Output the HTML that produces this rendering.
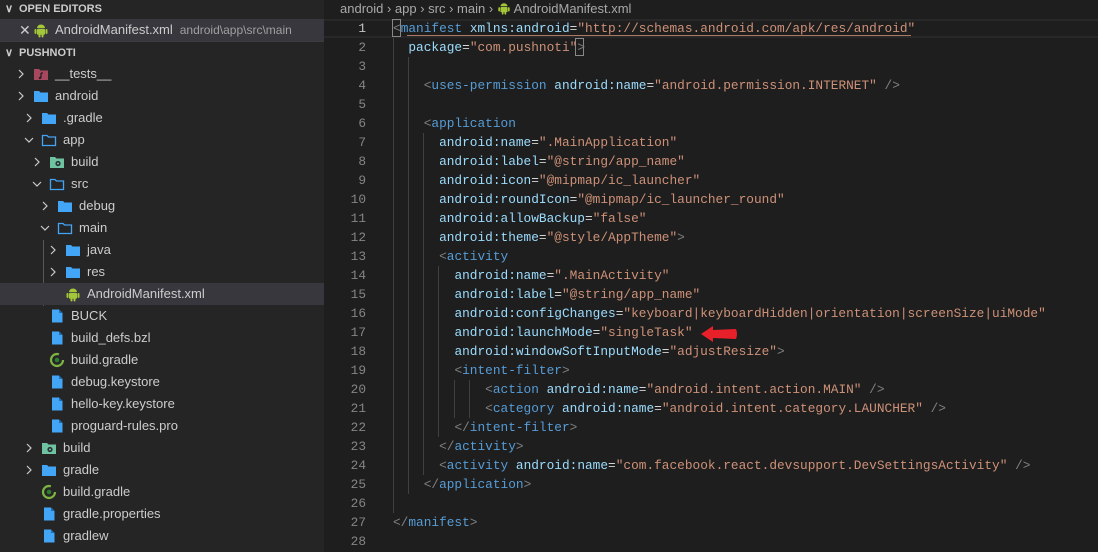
<!DOCTYPE html>
<html><head><meta charset="utf-8"><style>
*{margin:0;padding:0;box-sizing:border-box}
body{width:1098px;height:552px;overflow:hidden;background:#1e1e1e;position:relative;font-family:"Liberation Sans",sans-serif}
#side{position:absolute;left:0;top:0;width:324px;height:552px;background:#252526}
.hdr{position:absolute;left:0;height:22px;width:324px;color:#ccc;font-size:11px;font-weight:bold;line-height:22px}
.hdr .cv{position:absolute;left:5px;top:0}
.hdr .ht{position:absolute;left:19px;color:#ccc}
.row{position:absolute;left:0;width:324px;height:22px;color:#ccc;font-size:13px;line-height:22px;white-space:nowrap}
.row.sel{background:#37373d}
.row svg{position:absolute}
.row .lb{position:absolute;top:0}
.bc{position:absolute;left:340px;top:0;height:19px;line-height:17px;font-size:13px;color:#a9a9a9;white-space:nowrap}
.ln{position:absolute;left:330px;width:36px;text-align:right;font-family:"Liberation Mono",monospace;font-size:12.8px;color:#858585;height:19px;line-height:19px}
.ln.cur{color:#c6c6c6}
.cl{position:absolute;left:393px;height:19px;line-height:19px;font-family:"Liberation Mono",monospace;font-size:12.8px;white-space:pre;color:#d4d4d4}
.t{color:#569cd6}.a{color:#9cdcfe}.s{color:#ce9178}.p{color:#808080}
.g{position:absolute;width:1px;background:#404040}
</style></head><body>
<div id="side">
<div class="hdr" style="top:-2px"><span class="cv">&#8744;</span><span class="ht">OPEN EDITORS</span></div>
<div class="row sel" style="top:19px">
<span class="lb" style="left:19px;color:#ccc;font-size:14px">✕</span>
<svg style="left:33px;top:3px" width="16" height="16" viewBox="0 0 16 16"><path d="M4 6a4 3.5 0 0 1 8 0z" fill="#a4c639"/><rect x="4" y="6.8" width="8" height="6" rx="1" fill="#a4c639"/><rect x="1.5" y="7" width="2" height="5" rx="1" fill="#a4c639"/><rect x="12.5" y="7" width="2" height="5" rx="1" fill="#a4c639"/><rect x="5.5" y="12" width="2" height="3.5" rx="1" fill="#a4c639"/><rect x="8.5" y="12" width="2" height="3.5" rx="1" fill="#a4c639"/></svg>
<span class="lb" style="left:55px">AndroidManifest.xml <span style="font-size:12px;color:#a0a0a0">&nbsp;android\app\src\main</span></span></div>
<div style="position:absolute;top:41px;left:0;width:324px;height:1px;background:#3c3c3c"></div>
<div class="hdr" style="top:42px"><span class="cv">&#8744;</span><span class="ht">PUSHNOTI</span></div>
<div style="position:absolute;left:43px;top:240px;width:1px;height:66px;background:#585858"></div>
<div id="tree"></div>
</div>
<div class="bc">android &#8250; app &#8250; src &#8250; main &#8250; <svg width="14" height="14" viewBox="0 0 16 16" style="vertical-align:-2px"><path d="M4 6a4 3.5 0 0 1 8 0z" fill="#a4c639"/><rect x="4" y="6.8" width="8" height="6" rx="1" fill="#a4c639"/><rect x="1.5" y="7" width="2" height="5" rx="1" fill="#a4c639"/><rect x="12.5" y="7" width="2" height="5" rx="1" fill="#a4c639"/><rect x="5.5" y="12" width="2" height="3.5" rx="1" fill="#a4c639"/><rect x="8.5" y="12" width="2" height="3.5" rx="1" fill="#a4c639"/></svg> AndroidManifest.xml</div>
<div style="position:absolute;left:324px;top:19px;width:774px;height:19px;border-top:2px solid #282828;border-bottom:2px solid #282828"></div>
<div style="position:absolute;left:407px;top:35px;width:504px;height:1px;background:#ce9178;opacity:.8"></div>
<div style="position:absolute;left:392px;top:19px;width:9px;height:18px;border:1px solid #888"></div>
<div style="position:absolute;left:575px;top:38px;width:9px;height:18px;border:1px solid #888"></div>
<div id="code"></div>
<svg style="position:absolute;left:700px;top:325px" width="38" height="18" viewBox="0 0 38 18"><path d="M1 9 L13 1 L13 5 L36 4 Q38 9 36 14 L13 13 L13 17 Z" fill="#e8202a"/></svg>
<script>
var F='<path d="M1 3h5l1.5 1.5H15v9.5H1z" fill="#42a5f5"/>';
var FO='<path d="M1.5 3.5h4.5l1.5 1.5h7v8.5h-13z" fill="none" stroke="#42a5f5" stroke-width="1.3"/>';
var FB='<path d="M1 3h5l1.5 1.5H15v9.5H1z" fill="#6fc3a0"/><circle cx="9" cy="9.5" r="2.6" fill="#263238"/><circle cx="9" cy="9.5" r="1" fill="#6fc3a0"/>';
var FT='<path d="M1 3h5l1.5 1.5H15v9.5H1z" fill="#a8485f"/><path d="M8 7v5M8 7h2" stroke="#222" stroke-width="1.3"/><circle cx="7" cy="12" r="1.2" fill="#222"/>';
var FI='<path d="M3 1.5h7l3.5 3.5v9.5H3z" fill="#42a5f5"/><path d="M10 1.5v3.5h3.5" fill="#1e6fb5"/>';
var GR='<circle cx="8" cy="8" r="6" fill="none" stroke="#7cb342" stroke-width="2.2" stroke-dasharray="30 8"/><circle cx="8" cy="8" r="2.3" fill="#2e7d32"/>';
var AN='<path d="M4 6a4 3.5 0 0 1 8 0z" fill="#a4c639"/><rect x="4" y="6.8" width="8" height="6" rx="1" fill="#a4c639"/><rect x="1.5" y="7" width="2" height="5" rx="1" fill="#a4c639"/><rect x="12.5" y="7" width="2" height="5" rx="1" fill="#a4c639"/><rect x="5.5" y="12" width="2" height="3.5" rx="1" fill="#a4c639"/><rect x="8.5" y="12" width="2" height="3.5" rx="1" fill="#a4c639"/>';
var items=[[0,FT,'__tests__','>'],[0,F,'android','>'],[1,F,'.gradle','>'],[1,FO,'app','v'],[2,FB,'build','>'],[2,FO,'src','v'],[3,F,'debug','>'],[3,FO,'main','v'],[4,F,'java','>'],[4,F,'res','>'],[4,AN,'AndroidManifest.xml',''],[2,FI,'BUCK',''],[2,FI,'build_defs.bzl',''],[2,GR,'build.gradle',''],[2,FI,'debug.keystore',''],[2,FI,'hello-key.keystore',''],[2,FI,'proguard-rules.pro',''],[1,FB,'build','>'],[1,F,'gradle','>'],[1,GR,'build.gradle',''],[1,FI,'gradle.properties',''],[1,FI,'gradlew','']];
var h='';
items.forEach(function(it,i){var top=63+22*i,L=it[0];
h+='<div class="row'+(i==10?' sel':'')+'" style="top:'+top+'px">';
if(it[3]=='>')h+='<svg style="left:'+(16+8*L)+'px;top:5px" width="10" height="12"><path d="M3 2l4 4-4 4" fill="none" stroke="#ccc" stroke-width="1.2"/></svg>';
if(it[3]=='v')h+='<svg style="left:'+(15+8*L)+'px;top:5px" width="12" height="12"><path d="M2 4l4 4 4-4" fill="none" stroke="#ccc" stroke-width="1.2"/></svg>';
h+='<svg style="left:'+(33+8*L)+'px;top:3px" width="16" height="16" viewBox="0 0 16 16">'+it[1]+'</svg>';
h+='<span class="lb" style="left:'+(55+8*L)+'px">'+it[2]+'</span></div>';});
document.getElementById('tree').innerHTML=h;
function T(x){return '<span class="p">&lt;</span><span class="t">'+x+'</span>'}
function A(n,v){return '<span class="a">'+n+'</span>=<span class="s">"'+v+'"</span>'}
var P='<span class="p">&gt;</span>',SC=' <span class="p">/&gt;</span>';
var L=[T('manifest')+' '+A('xmlns:android','http://schemas.android.com/apk/res/android'),
'  '+A('package','com.pushnoti')+P,'',
'    '+T('uses-permission')+' '+A('android:name','android.permission.INTERNET')+SC,'',
'    '+T('application'),
'      '+A('android:name','.MainApplication'),
'      '+A('android:label','@string/app_name'),
'      '+A('android:icon','@mipmap/ic_launcher'),
'      '+A('android:roundIcon','@mipmap/ic_launcher_round'),
'      '+A('android:allowBackup','false'),
'      '+A('android:theme','@style/AppTheme')+P,
'      '+T('activity'),
'        '+A('android:name','.MainActivity'),
'        '+A('android:label','@string/app_name'),
'        '+A('android:configChanges','keyboard|keyboardHidden|orientation|screenSize|uiMode'),
'        '+A('android:launchMode','singleTask'),
'        '+A('android:windowSoftInputMode','adjustResize')+P,
'        '+T('intent-filter')+P,
'            '+T('action')+' '+A('android:name','android.intent.action.MAIN')+SC,
'            '+T('category')+' '+A('android:name','android.intent.category.LAUNCHER')+SC,
'        <span class="p">&lt;/</span><span class="t">intent-filter</span>'+P,
'      <span class="p">&lt;/</span><span class="t">activity</span>'+P,
'      '+T('activity')+' '+A('android:name','com.facebook.react.devsupport.DevSettingsActivity')+SC,
'    <span class="p">&lt;/</span><span class="t">application</span>'+P,'',
'<span class="p">&lt;/</span><span class="t">manifest</span>'+P,''];
var c='';
var g=[[393,2,26],[408,3,25],[423,7,24],[438,14,22],[454,20,21],[469,20,21]];
g.forEach(function(q){c+='<div class="g" style="left:'+q[0]+'px;top:'+(19+19*(q[1]-1))+'px;height:'+(19*(q[2]-q[1]+1))+'px"></div>'});
L.forEach(function(s,i){var top=19+19*i;c+='<div class="ln'+(i==0?' cur':'')+'" style="top:'+top+'px">'+(i+1)+'</div><div class="cl" style="top:'+top+'px">'+s+'</div>'});
document.getElementById('code').innerHTML=c;
</script>
</body></html>
